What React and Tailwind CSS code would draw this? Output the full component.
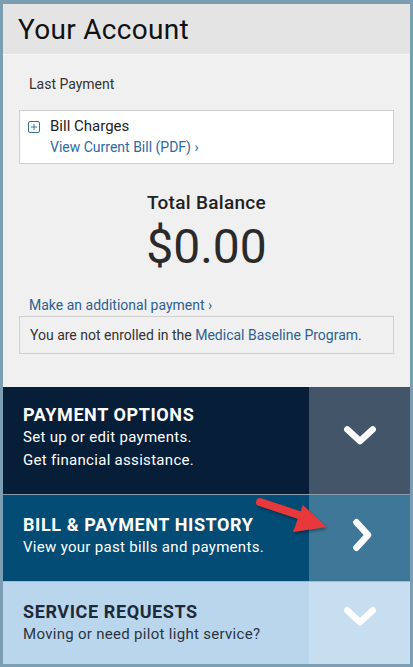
import React from 'react';

const font = { fontFamily: 'Roboto, "Liberation Sans", sans-serif' };

function Chevron({ dir = 'down', className = '' }) {
  const d = dir === 'down' ? 'M4 6 L16 17 L28 6' : 'M6 4 L17 16 L6 28';
  return (
    <svg viewBox="0 0 32 32" className={className} fill="none">
      <path d={d} stroke="white" strokeWidth="6" strokeLinecap="round" strokeLinejoin="round" />
    </svg>
  );
}

function Panel({ title, lines, left, right, titleColor, textColor, dir, chevronClass, pad, wrap }) {
  return (
    <div className={`flex ${wrap}`}>
      <div className={`flex-1 ${left} ${pad} pl-[20px]`}>
        <div className={`text-[18px] font-bold tracking-[0.6px] leading-[22px] ${titleColor}`}>{title}</div>
        {lines.map((l, i) => (
          <div key={i} className={`text-[15px] tracking-[0.3px] leading-[23px] ${textColor}`}>{l}</div>
        ))}
      </div>
      <div className={`w-[101px] flex items-center justify-center ${right}`}>
        <Chevron dir={dir} className={chevronClass} />
      </div>
    </div>
  );
}

export default function App() {
  return (
    <div style={font} className="w-[413px] h-[667px] bg-[#7c9eb3] pt-[4px] px-[3px] pb-[3px] overflow-hidden relative">
      <div className="flex flex-col h-full">
        <div className="shrink-0 h-[51px] bg-[#e4e4e4] pl-[15px] flex items-center border-b border-[#f6f6f6]">
          <h1 className="text-[28px] text-[#111] tracking-[0.3px] leading-none mt-[2px]">Your Account</h1>
        </div>
        <div className="shrink-0 bg-[#f0f0f0] h-[332px] px-[16px]">
          <div className="pl-[10px] pt-[21px] text-[14px] text-[#333] leading-[16px]">Last Payment</div>
          <div className="mt-[18px] h-[54px] bg-white border border-[#cfcfcf] pl-[8px] pt-[6px]">
            <div className="flex items-center gap-[10px]">
              <span className="w-[12px] h-[12px] border border-[#3a6f9c] rounded-[2px] flex items-center justify-center">
                <svg viewBox="0 0 10 10" className="w-[8px] h-[8px]"><path d="M5 1V9M1 5H9" stroke="#3a6f9c" strokeWidth="1.2" /></svg>
              </span>
              <span className="text-[15px] text-[#222] leading-[19px]">Bill Charges</span>
            </div>
            <div className="pl-[22px] mt-[3px] text-[14px] text-[#2a6ca3] leading-[17px]">View Current Bill (PDF) ›</div>
          </div>
          <div className="text-center mt-[28px] text-[19px] text-[#222] leading-[22px] font-medium tracking-[0.3px]">Total Balance</div>
          <div className="text-center text-[48px] text-[#2a2a2a] leading-[48px] mt-[9px]">$0.00</div>
          <div className="pl-[10px] mt-[26px] text-[14px] text-[#2e5f93] leading-[16px]">Make an additional payment ›</div>
          <div className="mt-[3px] h-[38px] border border-[#cfcfcf] pl-[10px] flex items-center text-[14px] text-[#333]">
            <span>You are not enrolled in the <span className="text-[#2e5f93]">Medical Baseline Program</span>.</span>
          </div>
        </div>
        <Panel
          title="PAYMENT OPTIONS"
          lines={['Set up or edit payments.', 'Get financial assistance.']}
          left="bg-[#071e39]"
          right="bg-[#435568]"
          titleColor="text-white"
          textColor="text-white"
          dir="down"
          chevronClass="w-[34px] h-[34px] mt-[-2px]"
          pad="h-[107px] pt-[17px]"
          wrap="shrink-0"
        />
        <Panel
          title="BILL & PAYMENT HISTORY"
          lines={['View your past bills and payments.']}
          left="bg-[#034c75]"
          right="bg-[#3e7797]"
          titleColor="text-white"
          textColor="text-white"
          dir="right"
          chevronClass="w-[34px] h-[34px] ml-[14px] mt-[-6px]"
          pad="h-[86px] pt-[19px]"
          wrap="shrink-0 border-t border-[#8c9cad]"
        />
        <Panel
          title="SERVICE REQUESTS"
          lines={['Moving or need pilot light service?']}
          left="bg-[#bad6ec]"
          right="bg-[#c7def1]"
          titleColor="text-[#1d2a3a]"
          textColor="text-[#2a3442]"
          dir="down"
          chevronClass="w-[34px] h-[34px] mt-[-4px]"
          pad="pt-[19px]"
          wrap="flex-1 min-h-0 border-t border-[#9fbcd2]"
        />
      </div>
      <svg className="absolute left-0 top-0 pointer-events-none" width="413" height="667">
        <defs>
          <filter id="sh" x="-20%" y="-20%" width="140%" height="140%">
            <feDropShadow dx="1" dy="2" stdDeviation="1.5" floodColor="#000" floodOpacity="0.35" />
          </filter>
        </defs>
        <g filter="url(#sh)">
          <line x1="260" y1="502" x2="305" y2="517" stroke="#e8393a" strokeWidth="8" strokeLinecap="round" />
          <polygon points="303,505 326,527 293,532" fill="#e8393a" />
        </g>
      </svg>
    </div>
  );
}
